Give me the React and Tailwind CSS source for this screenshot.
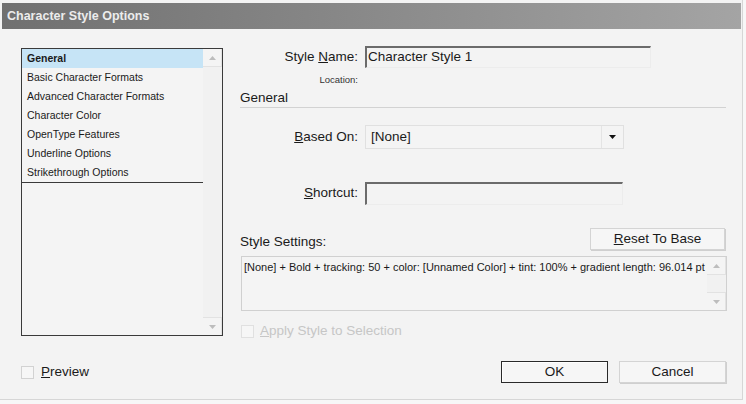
import React from 'react';

const font = { fontFamily: '"Liberation Sans", Arial, sans-serif' };

const items = [
    'General',
    'Basic Character Formats',
    'Advanced Character Formats',
    'Character Color',
    'OpenType Features',
    'Underline Options',
    'Strikethrough Options',
];

function Arrow({ up, dark }) {
    return (
        <svg width="7" height="4" viewBox="0 0 7 4">
            <path d={up ? 'M0 4 L3.5 0 L7 4 Z' : 'M0 0 L7 0 L3.5 4 Z'} fill={dark ? '#111' : '#bdbdbd'} />
        </svg>
    );
}

function ScrollBar({ h }) {
    return (
        <div className="flex w-[19px] flex-col justify-between bg-[#f1f1f1]" style={{ height: h }}>
            <div className="flex h-[18px] items-center justify-center border-b border-r border-[#e2e2e2] bg-[#f4f4f4]">
                <Arrow up />
            </div>
            <div className="flex h-[18px] items-center justify-center border-t border-r border-[#e2e2e2] bg-[#f4f4f4]">
                <Arrow />
            </div>
        </div>
    );
}

function Inset({ className, children }) {
    return (
        <div className={`border-t-2 border-l-2 border-b border-r border-t-[#6b6b6b] border-l-[#6b6b6b] border-b-[#ececec] border-r-[#ececec] ${className}`}>
            {children}
        </div>
    );
}

function Check({ disabled }) {
    return <div className={`h-[13px] w-[13px] border ${disabled ? 'border-[#e0e0e0]' : 'border-[#d2d2d2]'} bg-[#f6f6f6]`} />;
}

export default function App() {
    return (
        <div className="h-[404px] w-[746px] overflow-hidden bg-[#f7f7f7] text-[#1a1a1a]" style={font}>
            <div className="h-[400px] w-[743px] border-b border-r border-[#d6d6d6] bg-[#f3f3f3] pt-[3px] pl-[2px]">
                {/* title bar */}
                <div className="flex h-[26px] w-[739px] items-center bg-gradient-to-r from-[#707070] to-[#a4a4a4] pl-[5px]">
                    <span className="text-[12.5px] font-bold text-[#ececec]">Character Style Options</span>
                </div>

                <div className="flex items-start">
                    {/* left list */}
                    <div className="ml-[19px] mt-[19px] flex h-[288px] w-[202px] border border-[#3a3a3a] bg-[#f4f4f4]">
                        <div className="flex-1">
                            <div className="border-b border-[#3a3a3a]">
                                {items.map((it, i) => (
                                    <div
                                        key={it}
                                        className={`flex h-[19px] items-center pl-[5px] text-[10.5px] ${i === 0 ? 'bg-[#c6e4f6] font-bold' : ''}`}
                                    >
                                        {it}
                                    </div>
                                ))}
                            </div>
                        </div>
                        <ScrollBar h={286} />
                    </div>

                    {/* right column */}
                    <div className="ml-[17px] flex w-[486px] flex-col">
                        <div className="mt-[17px] flex items-center">
                            <div className="w-[118px] text-right text-[13.5px]">
                                Style <span className="underline">N</span>ame:
                            </div>
                            <Inset className="ml-[7px] flex h-[22px] w-[286px] items-center pl-[1px] text-[13.5px]">
                                Character Style 1
                            </Inset>
                        </div>
                        <div className="mt-[7px] h-[10px] w-[118px] text-right text-[9.5px] leading-[10px] text-[#333]">Location:</div>
                        <div className="mt-[5px] h-[18px] border-b border-[#d2d2d2] text-[13.5px] leading-[16px]">General</div>

                        <div className="mt-[17px] flex items-center">
                            <div className="w-[118px] text-right text-[13.5px]">
                                <span className="underline">B</span>ased On:
                            </div>
                            <div className="ml-[7px] flex h-[24px] w-[259px] items-center border border-[#e0e0e0] bg-[#f4f4f4]">
                                <span className="flex-1 pl-[5px] text-[13.5px]">[None]</span>
                                <div className="flex h-[22px] w-[22px] items-center justify-center border-l border-[#e4e4e4]">
                                    <Arrow dark />
                                </div>
                            </div>
                        </div>

                        <div className="mt-[33px] flex items-center">
                            <div className="w-[118px] text-right text-[13.5px]">
                                <span className="underline">S</span>hortcut:
                            </div>
                            <Inset className="ml-[7px] h-[23px] w-[258px]" />
                        </div>

                        <div className="mt-[23px] flex items-end justify-between">
                            <div className="text-[13.5px] leading-[16px]">Style Settings:</div>
                            <button className="mr-[1px] flex h-[22px] w-[135px] items-center justify-center border border-[#d4d4d4] bg-[#f6f6f6] text-[13.5px] shadow-[1px_1px_0_#cfcfcf]">
                                <span className="underline">R</span>eset To Base
                            </button>
                        </div>

                        <div className="ml-[1px] mt-[6px] flex h-[55px] w-[486px] border border-[#d0d0d0] bg-[#f4f4f4]">
                            <div className="flex-1 pl-[2px] pt-[4px] text-[11px] leading-[12px]">
                                [None] + Bold + tracking: 50 + color: [Unnamed Color] + tint: 100% + gradient length: 96.014 pt
                            </div>
                            <ScrollBar h={53} />
                        </div>

                        <div className="ml-[1px] mt-[14px] flex h-[13px] items-center">
                            <Check disabled />
                            <span className="ml-[6px] text-[13.5px] text-[#c6c6c6]">
                                <span className="underline">A</span>pply Style to Selection
                            </span>
                        </div>
                    </div>
                </div>

                {/* bottom row */}
                <div className="mt-[23px] flex items-center">
                    <div className="ml-[19px] flex items-center">
                        <Check />
                        <span className="ml-[7px] text-[13.5px]">
                            <span className="underline">P</span>review
                        </span>
                    </div>
                    <div className="ml-auto mr-[16px] flex gap-[11px]">
                        <button className="h-[22px] w-[107px] border border-[#2a2a2a] bg-[#f6f6f6] text-[13.5px] shadow-[inset_1px_1px_0_#fff]">OK</button>
                        <button className="h-[22px] w-[107px] border border-[#d4d4d4] bg-[#f6f6f6] text-[13.5px] shadow-[1px_1px_0_#cfcfcf]">Cancel</button>
                    </div>
                </div>
            </div>
        </div>
    );
}
